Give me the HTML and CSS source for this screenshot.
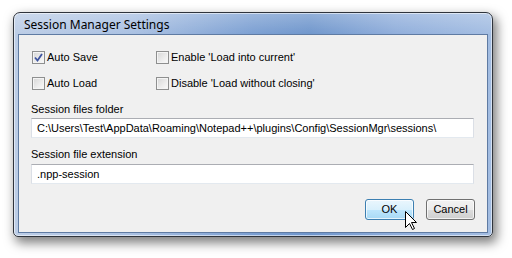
FILE: index.html
```html
<!DOCTYPE html>
<html>
<head>
<meta charset="utf-8">
<link rel="stylesheet" href="styles.css">
</head>
<body>
<div class="window">
  <div class="titlebar">Session Manager Settings</div>
  <div class="client">
    <div class="checks">
      <label class="check"><span class="box"><svg viewBox="0 0 9 9" width="9" height="9"><path d="M1 4.5 L3.5 7.5 L8 1" fill="none" stroke="#3e54a0" stroke-width="1.8"/></svg></span>Auto Save</label>
      <label class="check"><span class="box"></span>Enable 'Load into current'</label>
      <label class="check"><span class="box"></span>Auto Load</label>
      <label class="check"><span class="box"></span>Disable 'Load without closing'</label>
    </div>
    <div class="label first">Session files folder</div>
    <div class="input">C:\Users\Test\AppData\Roaming\Notepad++\plugins\Config\SessionMgr\sessions\</div>
    <div class="label second">Session file extension</div>
    <div class="input">.npp-session</div>
    <div class="buttons">
      <div class="btn ok">OK</div>
      <div class="btn">Cancel</div>
    </div>
    <svg class="cursor" width="13" height="20" viewBox="0 0 13 20"><path d="M0.5 0.5 L0.5 16.5 L4.5 12.5 L7.5 18.5 L9.5 17.5 L6.5 11.5 L11.5 11.5 Z" fill="#fff" stroke="#000" stroke-width="1"/></svg>
  </div>
</div>
</body>
</html>
```

FILE: styles.css
```css
html, body {
  margin: 0;
  padding: 0;
  background: #ffffff;
}
body {
  width: 512px;
  height: 258px;
  overflow: hidden;
}
.window {
  margin: 12px 0 0 13px;
  border: 1px solid #2f343c;
  border-radius: 7px 7px 5px 5px;
  box-shadow: 3px 5px 11px 1px rgba(0,0,0,0.5), inset 0 0 0 1px rgba(255,255,255,0.55);
  background:
    linear-gradient(to bottom, rgba(255,255,255,0.25) 0%, rgba(255,255,255,0) 22px, rgba(0,0,0,0) 100%),
    linear-gradient(to right, #bccde6 0%, #a9c0e2 25%, #7b9fd2 50%, #6f96cc 62%, #90aedb 80%, #a3bde2 100%);
  padding: 0 5px 4px 5px;
  box-sizing: border-box;
  display: flex;
  flex-direction: column;
  width: 480px;
  height: 225px;
}
.titlebar {
  height: 22px;
  flex: none;
  font-family: "Noto Sans", "Open Sans", sans-serif;
  font-size: 12px;
  line-height: 22px;
  color: #000;
  padding-left: 5px;
  padding-top: 1px;
  box-sizing: border-box;
  white-space: nowrap;
}
.client {
  position: relative;
  flex: 1;
  background: #f0f0f0;
  box-shadow: 0 0 0 1px #5f7ba3;
  padding: 16px 13px 0 12px;
  font-family: "Liberation Sans", Arial, sans-serif;
  font-size: 11px;
  color: #000;
}
.checks {
  display: grid;
  grid-template-columns: 124px auto;
  row-gap: 13px;
  padding-left: 1px;
}
.check {
  display: flex;
  align-items: center;
  height: 13px;
  line-height: 13px;
  white-space: nowrap;
}
.box {
  width: 11px;
  height: 11px;
  border: 1px solid #8e8f8f;
  background: linear-gradient(135deg, #d6d6d6 0%, #ededed 60%, #fbfbfb 100%);
  box-shadow: inset 0 0 0 1px #f4f4f4;
  margin-right: 2px;
  display: flex;
  align-items: center;
  justify-content: center;
  flex: none;
}
.label {
  height: 13px;
  line-height: 13px;
}
.label.first { margin-top: 13px; }
.label.second { margin-top: 10px; }
.input {
  margin-top: 2px;
  height: 20px;
  box-sizing: border-box;
  background: #fff;
  border: 1px solid #dbdfe6;
  border-top-color: #abadb3;
  border-bottom-color: #e3e9ef;
  padding-left: 5px;
  line-height: 18px;
  white-space: nowrap;
  overflow: hidden;
}
.label.second + .input { margin-top: 3px; }
.buttons {
  display: flex;
  justify-content: flex-end;
  gap: 12px;
  margin-top: 15px;
  margin-right: -1px;
}
.btn {
  width: 49px;
  height: 21px;
  box-sizing: border-box;
  border: 1px solid #707070;
  border-radius: 3px;
  background: linear-gradient(to bottom, #f2f2f2 0%, #ebebeb 50%, #dddddd 51%, #cfcfcf 100%);
  box-shadow: inset 0 0 0 1px rgba(255,255,255,0.7);
  text-align: center;
  line-height: 19px;
}
.btn.ok {
  border-color: #3c7fb1;
  background: linear-gradient(to bottom, #eaf6fd 0%, #d9f0fc 50%, #bee6fd 51%, #a7d9f5 100%);
}
.cursor {
  position: absolute;
  left: 386px;
  top: 176px;
}
```
